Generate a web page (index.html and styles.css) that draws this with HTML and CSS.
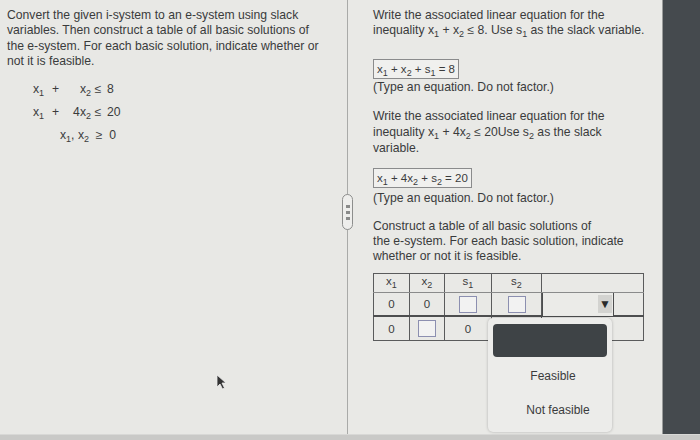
FILE: index.html
```html
<!DOCTYPE html>
<html>
<head>
<meta charset="utf-8">
<link rel="stylesheet" href="styles.css">
</head>
<body>
<div class="screen">
  <div class="main">
    <div class="left">
      <p class="para lp">Convert the given i-system to an e-system using slack variables. Then construct a table of all basic solutions of the e-system. For each basic solution, indicate whether or not it is feasible.</p>
      <div class="eqs">
        <span>x<sub>1</sub></span><span>+</span><span class="r">x<sub>2</sub></span><span class="c">≤</span><span class="v">8</span>
        <span>x<sub>1</sub></span><span>+</span><span class="r">4x<sub>2</sub></span><span class="c">≤</span><span class="v">20</span>
        <span class="last">x<sub>1</sub>, x<sub>2</sub> &nbsp;≥ &nbsp;0</span>
      </div>
      <div class="cursor">
        <svg width="12" height="16" viewBox="0 0 12 16"><path d="M1 1 L1 13 L4 10 L6.5 15 L8.5 14 L6 9 L10 9 Z" fill="#333" stroke="#eee" stroke-width="0.8"/></svg>
      </div>
      <div class="handle"><i></i><i></i><i></i></div>
    </div>
    <div class="right">
      <p class="para rp">Write the associated linear equation for the inequality x<sub>1</sub> + x<sub>2</sub> ≤ 8. Use s<sub>1</sub> as the slack variable.</p>
      <div class="answer">x<sub>1</sub> + x<sub>2</sub> + s<sub>1</sub> = 8</div>
      <p class="hint">(Type an equation. Do not factor.)</p>
      <p class="para rp p2">Write the associated linear equation for the inequality x<sub>1</sub> + 4x<sub>2</sub> ≤ 20Use s<sub>2</sub> as the slack variable.</p>
      <div class="answer a2">x<sub>1</sub> + 4x<sub>2</sub> + s<sub>2</sub> = 20</div>
      <p class="hint h2">(Type an equation. Do not factor.)</p>
      <p class="para p3">Construct a table of all basic solutions of<br>the e-system. For each basic solution, indicate whether or not it is feasible.</p>
      <div class="tablewrap">
        <table class="sol">
          <tr class="head">
            <td class="w1">x<sub>1</sub></td><td class="w2">x<sub>2</sub></td><td class="w3">s<sub>1</sub></td><td class="w4">s<sub>2</sub></td><td class="w5"></td>
          </tr>
          <tr class="row1">
            <td>0</td><td>0</td><td><span class="inp"></span></td><td><span class="inp"></span></td>
            <td class="selcell"><div class="select"><span class="arrow">▼</span></div></td>
          </tr>
          <tr class="row2">
            <td>0</td><td><span class="inp"></span></td><td>0</td><td></td><td></td>
          </tr>
        </table>
        <div class="menu">
          <div class="menu-sel"></div>
          <div class="menu-item">Feasible</div>
          <div class="menu-item nf">Not feasible</div>
        </div>
      </div>
    </div>
    <div class="dark"></div>
  </div>
  <div class="bottom"></div>
</div>
</body>
</html>
```
FILE: styles.css
```css
* { box-sizing: border-box; }
html, body { margin: 0; padding: 0; }
body {
  width: 700px; height: 440px; overflow: hidden;
  font-family: "Liberation Sans", Arial, sans-serif;
  font-size: 12.2px; color: #3a3b3c;
  background: #e7e7e4;
}
.screen { display: flex; flex-direction: column; height: 440px; }
.main { display: flex; flex: 1; }
.left {
  width: 348px; border-right: 1px solid #a9aaa8;
  padding: 8px 7px; position: relative;
  background: #e8e8e5;
}
.right {
  flex: 1; padding: 8px 0 0 25px;
  background: #e9e9e6;
}
.dark { width: 38px; background: #454a4e; border-left: 1px solid #9a9c9b; }
.bottom { height: 6px; background: #c9c9c7; border-top: 1px solid #d8d8d6; }
.para { margin: 0; line-height: 15.3px; }
.lp { width: 318px; }
.rp { width: 274px; }
sub { font-size: 9px; vertical-align: -3px; line-height: 1; }
.eqs {
  display: grid;
  grid-template-columns: 19px 17px 23px 12px auto;
  row-gap: 7px; line-height: 15px;
  margin: 13px 0 0 26px;
}
.eqs .r { text-align: right; padding-right: 1px; }
.eqs .c { text-align: center; }
.eqs .v { padding-left: 3px; }
.eqs .last { grid-column: 1 / 6; padding-left: 27px; }
.cursor { position: absolute; left: 216px; top: 374px; }
.handle {
  position: absolute; right: -6px; top: 194px;
  width: 11px; height: 36px; border: 1px solid #8d8e8d; border-radius: 6px;
  background: #eeeeec;
  display: flex; flex-direction: column; align-items: center; justify-content: center; gap: 3px;
}
.handle i { display: block; width: 4px; height: 3px; background: #8a8b8a; }
.answer {
  display: inline-block; margin-top: 20px;
  border: 1px solid #8a8b8c; background: #f0f0ee;
  padding: 2px 3px 3px; line-height: 14px; height: 20px;
  font-size: 11.5px;
}
.a2 { margin-top: 12px; }
.hint { margin: 1px 0 0; line-height: 15px; }
.h2 { margin-top: 3px; }
.p2 { margin-top: 14px; }
.p3 { margin-top: 13px; width: 260px; }
.tablewrap { position: relative; margin-top: 8px; width: 271px; }
.sol { border-collapse: collapse; width: 271px; }
.sol td {
  border: 1px solid #5a5b5c; text-align: center; padding: 0;
  font-size: 11.5px;
}
.sol .head td { height: 19px; border-bottom-color: #8a8b8b; }
.sol .row1 td { height: 24px; }
.sol .row2 td { height: 24px; border-top: 2px solid #4d4e4f; }
.w1 { width: 36px; } .w2 { width: 35px; } .w3 { width: 47px; } .w4 { width: 50px; }
.inp {
  display: inline-block; width: 18px; height: 17px; vertical-align: middle;
  border: 1px solid #8c8fb0; background: #f2f2f2;
}
.selcell { text-align: left !important; position: relative; }
.select {
  position: absolute; left: 0; top: 0; width: 72px; height: 24px;
  border: 1px solid #4c4d4e; border-top: none; background: #ebebe8;
}
.arrow {
  position: absolute; right: 1px; top: 2px; width: 14px; height: 18px;
  background: #d3d3d0; color: #2a2b2c; font-size: 12px; line-height: 18px; text-align: center;
}
.menu {
  position: absolute; left: 115px; top: 45px; width: 124px; height: 114px;
  background: #ececea; border-radius: 5px;
  box-shadow: 0 0 3px rgba(0,0,0,0.25);
  padding: 6px 5px;
}
.menu-sel { height: 33px; background: #3e4346; border-radius: 4px; }
.menu-item { text-align: center; line-height: 15px; margin-top: 12px; font-size: 12px; padding-left: 6px; }
.menu-item.nf { margin-top: 19px; padding-left: 16px; }
```
